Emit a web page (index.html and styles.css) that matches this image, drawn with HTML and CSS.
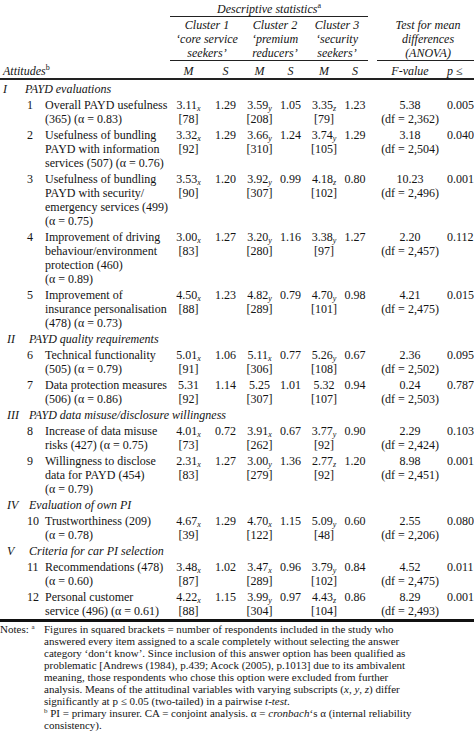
FILE: index.html
```html
<!DOCTYPE html>
<html lang="en">
<head>
<meta charset="utf-8">
<title>Table</title>
<link rel="stylesheet" href="styles.css">
</head>
<body>
<div class="page">
<table class="t">
<colgroup>
<col class="c-num"><col class="c-txt"><col class="c-m1"><col class="c-s1"><col class="c-m2"><col class="c-s2"><col class="c-m3"><col class="c-s3"><col class="c-gap"><col class="c-f"><col class="c-p">
</colgroup>
<thead>
<tr class="h1"><th colspan="2"></th><th colspan="6" class="desc">Descriptive statistics<sup>a</sup></th><th colspan="3"></th></tr>
<tr class="h2"><th colspan="2"></th><th colspan="2" class="cl">Cluster 1<br>‘core service<br>seekers’</th><th colspan="2" class="cl">Cluster 2<br>‘premium<br>reducers’</th><th colspan="2" class="cl">Cluster 3<br>‘security<br>seekers’</th><th></th><th colspan="2" class="cl">Test for mean<br>differences<br>(ANOVA)</th></tr>
<tr class="h3"><th colspan="2" class="att">Attitudes<sup>b</sup></th><th>M</th><th>S</th><th>M</th><th>S</th><th>M</th><th>S</th><th></th><th>F-value</th><th class="p">p ≤</th></tr>
</thead>
<tbody>
<tr class="sec first"><td colspan="11"><span class="rn">I</span><span>PAYD evaluations</span></td></tr>
<tr><td class="n">1</td><td class="it">Overall PAYD usefulness<br>(365) (α = 0.83)</td><td class="m">3.11<sub>x</sub><br>[78]</td><td class="s">1.29</td><td class="m">3.59<sub>y</sub><br>[208]</td><td class="s">1.05</td><td class="m">3.35<sub>z</sub><br>[79]</td><td class="s">1.23</td><td></td><td class="f">5.38<br>(df = 2,362)</td><td class="p">0.005</td></tr>
<tr><td class="n">2</td><td class="it">Usefulness of bundling<br>PAYD with information<br>services (507) (α = 0.76)</td><td class="m">3.32<sub>x</sub><br>[92]</td><td class="s">1.29</td><td class="m">3.66<sub>y</sub><br>[310]</td><td class="s">1.24</td><td class="m">3.74<sub>y</sub><br>[105]</td><td class="s">1.29</td><td></td><td class="f">3.18<br>(df = 2,504)</td><td class="p">0.040</td></tr>
<tr><td class="n">3</td><td class="it">Usefulness of bundling<br>PAYD with security/<br>emergency services (499)<br>(α = 0.75)</td><td class="m">3.53<sub>x</sub><br>[90]</td><td class="s">1.20</td><td class="m">3.92<sub>y</sub><br>[307]</td><td class="s">0.99</td><td class="m">4.18<sub>z</sub><br>[102]</td><td class="s">0.80</td><td></td><td class="f">10.23<br>(df = 2,496)</td><td class="p">0.001</td></tr>
<tr><td class="n">4</td><td class="it">Improvement of driving<br>behaviour/environment<br>protection (460)<br>(α = 0.89)</td><td class="m">3.00<sub>x</sub><br>[83]</td><td class="s">1.27</td><td class="m">3.20<sub>y</sub><br>[280]</td><td class="s">1.16</td><td class="m">3.38<sub>y</sub><br>[97]</td><td class="s">1.27</td><td></td><td class="f">2.20<br>(df = 2,457)</td><td class="p">0.112</td></tr>
<tr><td class="n">5</td><td class="it">Improvement of<br>insurance personalisation<br>(478) (α = 0.73)</td><td class="m">4.50<sub>x</sub><br>[88]</td><td class="s">1.23</td><td class="m">4.82<sub>y</sub><br>[289]</td><td class="s">0.79</td><td class="m">4.70<sub>y</sub><br>[101]</td><td class="s">0.98</td><td></td><td class="f">4.21<br>(df = 2,475)</td><td class="p">0.015</td></tr>
<tr class="sec"><td colspan="11"><span class="rn">II</span><span>PAYD quality requirements</span></td></tr>
<tr><td class="n">6</td><td class="it">Technical functionality<br>(505) (α = 0.79)</td><td class="m">5.01<sub>x</sub><br>[91]</td><td class="s">1.06</td><td class="m">5.11<sub>x</sub><br>[306]</td><td class="s">0.77</td><td class="m">5.26<sub>y</sub><br>[108]</td><td class="s">0.67</td><td></td><td class="f">2.36<br>(df = 2,502)</td><td class="p">0.095</td></tr>
<tr><td class="n">7</td><td class="it">Data protection measures<br>(506) (α = 0.86)</td><td class="m">5.31<br>[92]</td><td class="s">1.14</td><td class="m">5.25<br>[307]</td><td class="s">1.01</td><td class="m">5.32<br>[107]</td><td class="s">0.94</td><td></td><td class="f">0.24<br>(df = 2,503)</td><td class="p">0.787</td></tr>
<tr class="sec"><td colspan="11"><span class="rn">III</span><span>PAYD data misuse/disclosure willingness</span></td></tr>
<tr><td class="n">8</td><td class="it">Increase of data misuse<br>risks (427) (α = 0.75)</td><td class="m">4.01<sub>x</sub><br>[73]</td><td class="s">0.72</td><td class="m">3.91<sub>x</sub><br>[262]</td><td class="s">0.67</td><td class="m">3.77<sub>y</sub><br>[92]</td><td class="s">0.90</td><td></td><td class="f">2.29<br>(df = 2,424)</td><td class="p">0.103</td></tr>
<tr><td class="n">9</td><td class="it">Willingness to disclose<br>data for PAYD (454)<br>(α = 0.79)</td><td class="m">2.31<sub>x</sub><br>[83]</td><td class="s">1.27</td><td class="m">3.00<sub>y</sub><br>[279]</td><td class="s">1.36</td><td class="m">2.77<sub>z</sub><br>[92]</td><td class="s">1.20</td><td></td><td class="f">8.98<br>(df = 2,451)</td><td class="p">0.001</td></tr>
<tr class="sec"><td colspan="11"><span class="rn">IV</span><span>Evaluation of own PI</span></td></tr>
<tr><td class="n">10</td><td class="it">Trustworthiness (209)<br>(α = 0.78)</td><td class="m">4.67<sub>x</sub><br>[39]</td><td class="s">1.29</td><td class="m">4.70<sub>x</sub><br>[122]</td><td class="s">1.15</td><td class="m">5.09<sub>y</sub><br>[48]</td><td class="s">0.60</td><td></td><td class="f">2.55<br>(df = 2,206)</td><td class="p">0.080</td></tr>
<tr class="sec"><td colspan="11"><span class="rn">V</span><span>Criteria for car PI selection</span></td></tr>
<tr><td class="n">11</td><td class="it">Recommendations (478)<br>(α = 0.60)</td><td class="m">3.48<sub>x</sub><br>[87]</td><td class="s">1.02</td><td class="m">3.47<sub>x</sub><br>[289]</td><td class="s">0.96</td><td class="m">3.79<sub>y</sub><br>[102]</td><td class="s">0.84</td><td></td><td class="f">4.52<br>(df = 2,475)</td><td class="p">0.011</td></tr>
<tr class="last"><td class="n">12</td><td class="it">Personal customer<br>service (496) (α = 0.61)</td><td class="m">4.22<sub>x</sub><br>[88]</td><td class="s">1.15</td><td class="m">3.99<sub>y</sub><br>[304]</td><td class="s">0.97</td><td class="m">4.43<sub>z</sub><br>[104]</td><td class="s">0.86</td><td></td><td class="f">8.29<br>(df = 2,493)</td><td class="p">0.001</td></tr>
</tbody>
</table>
<div class="notes">
<div class="lbl">Notes:&nbsp;<sup>a</sup></div>
<div class="body">Figures in squared brackets = number of respondents included in the study who<br>answered every item assigned to a scale completely without selecting the answer<br>category ‘don‘t know’. Since inclusion of this answer option has been qualified as<br>problematic [Andrews (1984), p.439; Acock (2005), p.1013] due to its ambivalent<br>meaning, those respondents who chose this option were excluded from further<br>analysis. Means of the attitudinal variables with varying subscripts (<i>x</i>, <i>y</i>, <i>z</i>) differ<br>significantly at p ≤ 0.05 (two-tailed) in a pairwise <i>t-test</i>.<br><sup>b</sup> PI = primary insurer. CA = conjoint analysis. α = <i>cronbach</i>‘s α (internal reliability<br>consistency).</div>
</div>
</div>
</body>
</html>
```

FILE: styles.css
```css
html, body {
  margin: 0;
  padding: 0;
  background: #fff;
  overflow: hidden;
}
body {
  width: 474px;
  height: 742px;
  font-family: "Liberation Serif", "Times New Roman", serif;
  color: #141414;
}
.page {
  width: 474px;
  overflow: hidden;
}
.t {
  border-collapse: collapse;
  table-layout: fixed;
  width: 479px;
  font-size: 12px;
  line-height: 14px;
}
.c-num { width: 45px; }
.c-txt { width: 125px; }
.c-m1 { width: 37px; }
.c-s1 { width: 37px; }
.c-m2 { width: 31px; }
.c-s2 { width: 31px; }
.c-m3 { width: 36px; }
.c-s3 { width: 26px; }
.c-gap { width: 9px; }
.c-f { width: 66px; }
.c-p { width: 36px; }

th {
  font-weight: normal;
  font-style: italic;
  padding: 0;
  text-align: center;
  vertical-align: bottom;
  white-space: nowrap;
}
td {
  padding: 1px 0;
  vertical-align: top;
  white-space: nowrap;
}
.h1 th { padding-top: 2px; }
.desc { border-bottom: 1px solid #222; }
.h2 th { padding-top: 1px; }
.cl { border-bottom: 1px solid #222; }
.h3 th { padding-top: 3px; border-bottom: 2px solid #222; }
.att { text-align: left; padding-left: 3px; }
th.p { text-align: left; padding-left: 4px; }

sup {
  font-size: 8px;
  line-height: 0;
  vertical-align: 5px;
  font-style: normal;
}
sub {
  font-size: 8px;
  line-height: 0;
  vertical-align: -2px;
  font-style: italic;
}

.sec td { padding-left: 7px; font-style: italic; }
.sec.first td { padding-top: 2px; padding-left: 3px; }
.rn { display: inline-block; width: 22px; }
.n { padding-left: 27px; }
.m, .s, .f { text-align: center; }
td.p { padding-left: 4px; }
.last td { border-bottom: 3px solid #111; }

.notes {
  display: flex;
  font-size: 11px;
  line-height: 12px;
  padding-top: 1px;
}
.lbl {
  flex: none;
  width: 44px;
  white-space: nowrap;
}
.notes .body { white-space: nowrap; }
.notes sup { font-size: 7px; vertical-align: 4px; }
```
